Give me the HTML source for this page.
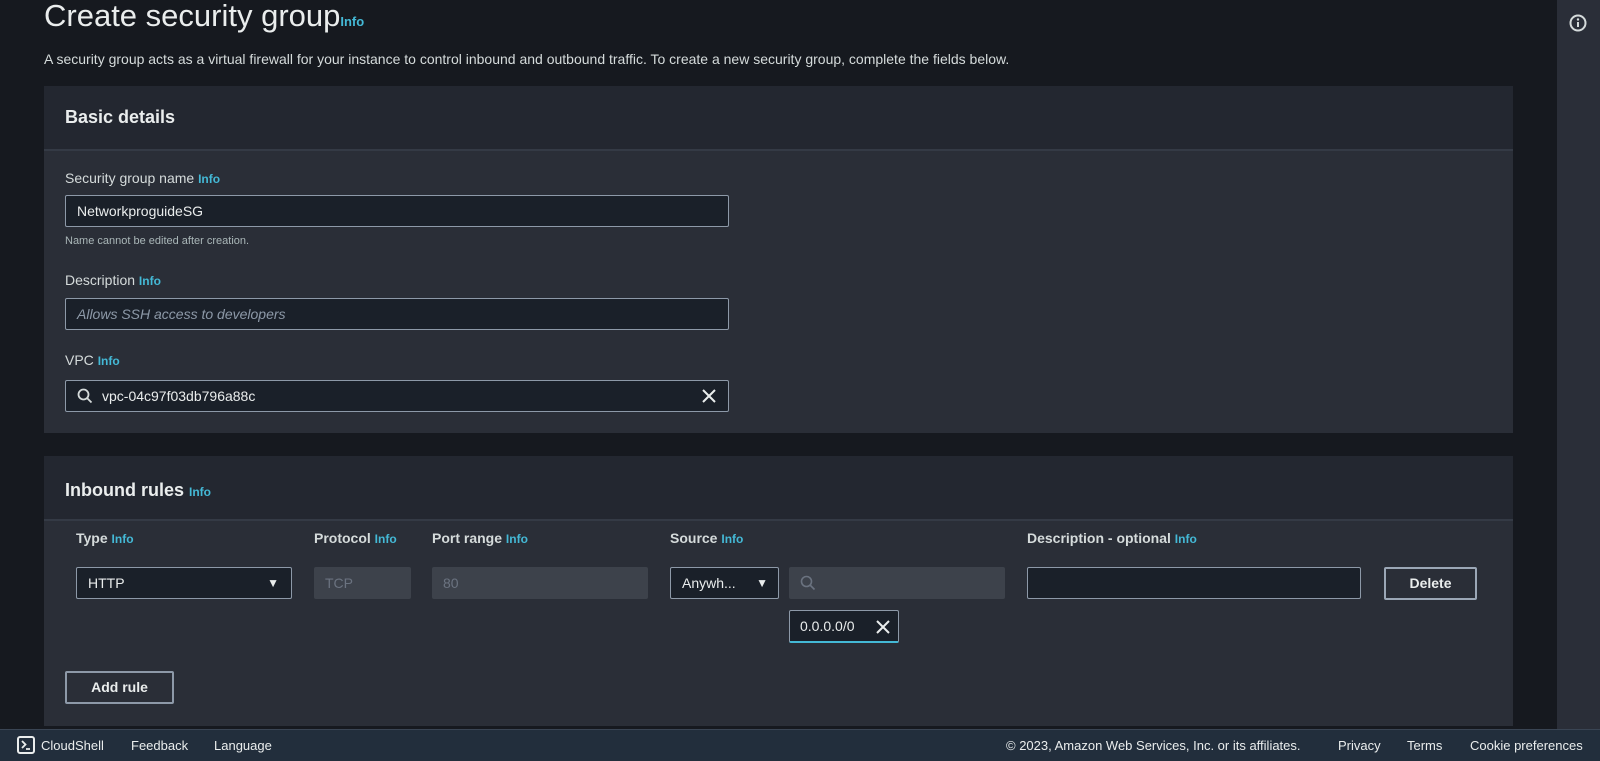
<!DOCTYPE html>
<html><head><meta charset="utf-8"><style>
*{box-sizing:border-box;margin:0;padding:0}
body{width:1600px;height:761px;overflow:hidden;background:#16191f;font-family:"Liberation Sans",sans-serif;color:#d5dbdb;position:relative}
.a{position:absolute}
.info{color:#44b9d6;font-weight:bold;font-size:12px}
.panel{position:absolute;left:44px;width:1469px;background:#2a2e37}
.ph{position:absolute;left:0;top:0;width:100%;background:#232730;border-bottom:2px solid #343a45}
.h2{font-size:18px;font-weight:bold;color:#eaeded}
.lbl{font-size:14px;color:#d5dbdb}
.inp{position:absolute;height:32px;background:#1a2029;border:1px solid #8d99a8;border-radius:2px;font-size:14px;color:#eaeded;padding:0 11px;line-height:30px}
.dis{position:absolute;height:32px;background:#3d424b;border-radius:2px;font-size:14px;color:#6b7380;padding:0 11px;line-height:32px}
.colh{font-size:14px;font-weight:bold;color:#d5dbdb}
.btn{position:absolute;height:33px;border:2px solid #8d99a8;border-radius:2px;font-size:14px;font-weight:bold;color:#eaeded;text-align:center;line-height:29px;background:#2a2e37}
.ft{font-size:13px;color:#eaeded;top:738px}
</style></head><body>
<div class="a" style="left:1557px;top:0;width:43px;height:729px;background:#2a2e38"></div>
<svg class="a" style="left:1568px;top:13px" width="20" height="20" viewBox="0 0 20 20"><circle cx="10" cy="10" r="7.5" fill="none" stroke="#d5dbdb" stroke-width="2"/><rect x="9" y="9" width="2" height="5" fill="#d5dbdb"/><circle cx="10" cy="6.5" r="1.2" fill="#d5dbdb"/></svg>

<div class="a" style="left:44px;top:-2px;font-size:31px;color:#eaeded">Create security group<span class="info" style="font-size:13px">Info</span></div>
<div class="a" style="left:44px;top:51px;font-size:14px;color:#d5dbdb">A security group acts as a virtual firewall for your instance to control inbound and outbound traffic. To create a new security group, complete the fields below.</div>

<div class="panel" style="top:86px;height:347px">
 <div class="ph" style="height:65px"></div>
 <div class="a h2" style="left:21px;top:21px">Basic details</div>
 <div class="a lbl" style="left:21px;top:84px">Security group name <span class="info">Info</span></div>
 <div class="inp" style="left:21px;top:109px;width:664px">NetworkproguideSG</div>
 <div class="a" style="left:21px;top:149px;font-size:11px;color:#aab7b8">Name cannot be edited after creation.</div>
 <div class="a lbl" style="left:21px;top:186px">Description <span class="info">Info</span></div>
 <div class="inp" style="left:21px;top:212px;width:664px;color:#8d99a8;font-style:italic">Allows SSH access to developers</div>
 <div class="a lbl" style="left:21px;top:266px">VPC <span class="info">Info</span></div>
 <div class="inp" style="left:21px;top:294px;width:664px;padding-left:36px">vpc-04c97f03db796a88c
  <svg class="a" style="left:11px;top:7px" width="16" height="16" viewBox="0 0 16 16"><circle cx="6.5" cy="6.5" r="5" fill="none" stroke="#d5dbdb" stroke-width="1.8"/><path d="M10 10l4.5 4.5" stroke="#d5dbdb" stroke-width="1.8"/></svg>
  <svg class="a" style="left:636px;top:8px" width="14" height="14" viewBox="0 0 14 14"><path d="M1 1l12 12M13 1L1 13" stroke="#eaeded" stroke-width="2"/></svg>
 </div>
</div>

<div class="panel" style="top:456px;height:270px">
 <div class="ph" style="height:65px"></div>
 <div class="a h2" style="left:21px;top:24px">Inbound rules <span class="info">Info</span></div>
 <div class="a colh" style="left:32px;top:74px">Type <span class="info">Info</span></div>
 <div class="a colh" style="left:270px;top:74px">Protocol <span class="info">Info</span></div>
 <div class="a colh" style="left:388px;top:74px">Port range <span class="info">Info</span></div>
 <div class="a colh" style="left:626px;top:74px">Source <span class="info">Info</span></div>
 <div class="a colh" style="left:983px;top:74px">Description - optional <span class="info">Info</span></div>
 <div class="inp" style="left:32px;top:111px;width:216px">HTTP<span class="a" style="right:12px;top:0;font-size:12px">▼</span></div>
 <div class="dis" style="left:270px;top:111px;width:97px">TCP</div>
 <div class="dis" style="left:388px;top:111px;width:216px">80</div>
 <div class="inp" style="left:626px;top:111px;width:109px">Anywh...<span class="a" style="right:10px;top:0;font-size:12px">▼</span></div>
 <div class="dis" style="left:745px;top:111px;width:216px">
  <svg class="a" style="left:11px;top:8px" width="16" height="16" viewBox="0 0 16 16"><circle cx="6.5" cy="6.5" r="5" fill="none" stroke="#6b7380" stroke-width="1.6"/><path d="M10 10l4.5 4.5" stroke="#6b7380" stroke-width="1.6"/></svg></div>
 <div class="inp" style="left:983px;top:111px;width:334px"></div>
 <div class="btn" style="left:1340px;top:111px;width:93px;border-color:#9ba7b6">Delete</div>
 <div class="inp" style="left:745px;top:154px;width:110px;height:33px;border-bottom:2px solid #44b9d6;padding-left:10px">0.0.0.0/0
  <svg class="a" style="left:86px;top:9px" width="14" height="14" viewBox="0 0 14 14"><path d="M1 1l12 12M13 1L1 13" stroke="#eaeded" stroke-width="2"/></svg></div>
 <div class="btn" style="left:21px;top:215px;width:109px">Add rule</div>
</div>

<div class="a" style="left:0;top:729px;width:1600px;height:32px;background:#222e3c;border-top:1px solid #3a4554"></div>
<svg class="a" style="left:17px;top:736px" width="18" height="18" viewBox="0 0 18 18"><rect x="1" y="1" width="16" height="16" rx="2" fill="none" stroke="#eaeded" stroke-width="2"/><path d="M5 5l3.5 3.5L5 12M9 13h4" stroke="#eaeded" stroke-width="1.8" fill="none"/></svg>
<div class="a ft" style="left:41px">CloudShell</div>
<div class="a ft" style="left:131px">Feedback</div>
<div class="a ft" style="left:214px">Language</div>
<div class="a ft" style="left:1006px">© 2023, Amazon Web Services, Inc. or its affiliates.</div>
<div class="a ft" style="left:1338px">Privacy</div>
<div class="a ft" style="left:1407px">Terms</div>
<div class="a ft" style="left:1470px">Cookie preferences</div>
</body></html>
